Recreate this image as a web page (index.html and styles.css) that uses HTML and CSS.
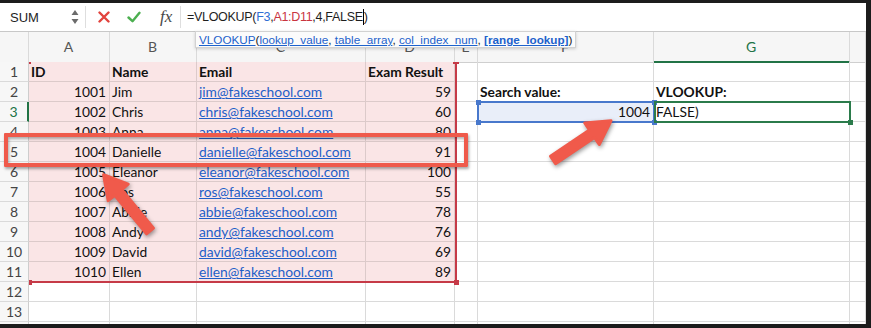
FILE: index.html
```html
<!DOCTYPE html>
<html lang="en">

<head>
  <meta charset="UTF-8">
  <title>VLOOKUP</title>
  <link rel="stylesheet" href="styles.css">
</head>

<body>
  <div class="screen">
    <div class="formula-bar">
      <div class="name-box">
        <span>SUM</span>
        <svg width="8" height="16" viewBox="0 0 8 16"><path d="M4 1 L7.5 6 H0.5 Z M4 15 L7.5 10 H0.5 Z" fill="#6b6b6b"/></svg>
      </div>
      <div class="fbar-icons">
        <svg class="ico-x" width="12" height="12" viewBox="0 0 12 12"><path d="M1.5 1.5 L10.5 10.5 M10.5 1.5 L1.5 10.5" stroke="#e2433d" stroke-width="2.4" stroke-linecap="round"/></svg>
        <svg class="ico-ok" width="14" height="12" viewBox="0 0 14 12"><path d="M1.5 6.5 L5.5 10.2 L12.5 1.8" fill="none" stroke="#4caf50" stroke-width="2.4" stroke-linecap="round" stroke-linejoin="round"/></svg>
        <span class="fx">fx</span>
      </div>
      <div class="formula">=VLOOKUP(<span class="ref-f">F3</span>,<span class="ref-a">A1:D11</span>,4,FALSE<span class="caret"></span>)</div>
    </div>

    <div class="sheet">
      <div class="r head">
        <div></div><div>A</div><div>B</div><div>C</div><div>D</div><div>E</div><div>F</div><div class="gcol">G</div><div></div>
      </div>
      <div class="r data">
        <div class="rh">1</div><div class="c b">ID</div><div class="c b">Name</div><div class="c b">Email</div><div class="c b">Exam Result</div><div class="c"></div><div class="c"></div><div class="c"></div><div class="c"></div>
      </div>
      <div class="r data">
        <div class="rh">2</div><div class="c n">1001</div><div class="c">Jim</div><div class="c"><a class="link">jim@fakeschool.com</a></div><div class="c n">59</div><div class="c"></div><div class="c b">Search value:</div><div class="c b">VLOOKUP:</div><div class="c"></div>
      </div>
      <div class="r data cur">
        <div class="rh">3</div><div class="c n">1002</div><div class="c">Chris</div><div class="c"><a class="link">chris@fakeschool.com</a></div><div class="c n">60</div><div class="c"></div><div class="c n sf">1004</div><div class="c">FALSE)</div><div class="c"></div>
      </div>
      <div class="r data">
        <div class="rh">4</div><div class="c n">1003</div><div class="c">Anna</div><div class="c"><a class="link">anna@fakeschool.com</a></div><div class="c n">80</div><div class="c"></div><div class="c"></div><div class="c"></div><div class="c"></div>
      </div>
      <div class="r data">
        <div class="rh">5</div><div class="c n">1004</div><div class="c">Danielle</div><div class="c"><a class="link">danielle@fakeschool.com</a></div><div class="c n">91</div><div class="c"></div><div class="c"></div><div class="c"></div><div class="c"></div>
      </div>
      <div class="r data">
        <div class="rh">6</div><div class="c n">1005</div><div class="c">Eleanor</div><div class="c"><a class="link">eleanor@fakeschool.com</a></div><div class="c n">100</div><div class="c"></div><div class="c"></div><div class="c"></div><div class="c"></div>
      </div>
      <div class="r data">
        <div class="rh">7</div><div class="c n">1006</div><div class="c">Ros</div><div class="c"><a class="link">ros@fakeschool.com</a></div><div class="c n">55</div><div class="c"></div><div class="c"></div><div class="c"></div><div class="c"></div>
      </div>
      <div class="r data">
        <div class="rh">8</div><div class="c n">1007</div><div class="c">Abbie</div><div class="c"><a class="link">abbie@fakeschool.com</a></div><div class="c n">78</div><div class="c"></div><div class="c"></div><div class="c"></div><div class="c"></div>
      </div>
      <div class="r data">
        <div class="rh">9</div><div class="c n">1008</div><div class="c">Andy</div><div class="c"><a class="link">andy@fakeschool.com</a></div><div class="c n">76</div><div class="c"></div><div class="c"></div><div class="c"></div><div class="c"></div>
      </div>
      <div class="r data">
        <div class="rh">10</div><div class="c n">1009</div><div class="c">David</div><div class="c"><a class="link">david@fakeschool.com</a></div><div class="c n">69</div><div class="c"></div><div class="c"></div><div class="c"></div><div class="c"></div>
      </div>
      <div class="r data">
        <div class="rh">11</div><div class="c n">1010</div><div class="c">Ellen</div><div class="c"><a class="link">ellen@fakeschool.com</a></div><div class="c n">89</div><div class="c"></div><div class="c"></div><div class="c"></div><div class="c"></div>
      </div>
      <div class="r">
        <div class="rh">12</div><div class="c"></div><div class="c"></div><div class="c"></div><div class="c"></div><div class="c"></div><div class="c"></div><div class="c"></div><div class="c"></div>
      </div>
      <div class="r">
        <div class="rh">13</div><div class="c"></div><div class="c"></div><div class="c"></div><div class="c"></div><div class="c"></div><div class="c"></div><div class="c"></div><div class="c"></div>
      </div>
      <div class="r">
        <div class="rh"></div><div class="c"></div><div class="c"></div><div class="c"></div><div class="c"></div><div class="c"></div><div class="c"></div><div class="c"></div><div class="c"></div>
      </div>
    </div>
  </div>

  <!-- overlays: function tip, reference borders, callouts -->
  <div class="tooltip"><a>VLOOKUP</a>(<a>lookup_value</a>, <a>table_array</a>, <a>col_index_num</a>, <a class="opt">[range_lookup]</a>)</div>

  <div class="range-a">
    <span class="k tl"></span><span class="k tr"></span><span class="k bl"></span><span class="k br"></span>
  </div>
  <div class="range-f">
    <span class="k tl"></span><span class="k tr"></span><span class="k bl"></span><span class="k br"></span>
  </div>
  <div class="active-g"><span class="k br"></span></div>

  <div class="callout-box"></div>

  <svg class="arrows" width="871" height="328" viewBox="0 0 871 328">
    <g transform="translate(150 231) rotate(-129.5)">
      <path d="M0 -4.5 H50 V-13 L73 0 L50 13 V4.5 H0 Z" fill="#f05a4b" stroke="#f05a4b" stroke-width="3" stroke-linejoin="round"/>
    </g>
    <g transform="translate(553 160) rotate(-34)">
      <path d="M0 -4.5 H47 V-13 L70 0 L47 13 V4.5 H0 Z" fill="#f05a4b" stroke="#f05a4b" stroke-width="3" stroke-linejoin="round"/>
    </g>
  </svg>
</body>

</html>
```

FILE: styles.css
```css
* {
  margin: 0;
  padding: 0;
}

body {
  width: 871px;
  height: 328px;
  position: relative;
  overflow: hidden;
  background: #1c1c1c;
  font-family: "Lato", "Liberation Sans", sans-serif;
}

.screen {
  margin: 3px 5px 0 0;
  height: 321px;
  background: #ffffff;
  overflow: hidden;
}

/* formula bar */
.formula-bar {
  height: 28px;
  display: flex;
  align-items: center;
  border-bottom: 1px solid #c8c8c8;
  font-family: "Liberation Sans", Arial, sans-serif;
  font-size: 13px;
  color: #1e1e1e;
}

.name-box {
  width: 86px;
  height: 22px;
  box-sizing: border-box;
  padding: 0 6px 0 10px;
  display: flex;
  align-items: center;
  justify-content: space-between;
  border-right: 1px solid #dedede;
}

.fbar-icons {
  width: 94px;
  height: 22px;
  display: flex;
  align-items: center;
  border-right: 1px solid #dedede;
}

.fbar-icons .ico-x {
  margin-left: 12px;
}

.fbar-icons .ico-ok {
  margin-left: 17px;
}

.fbar-icons .fx {
  margin-left: 19px;
  font-family: "Liberation Serif", serif;
  font-style: italic;
  font-size: 17px;
  color: #474747;
}

.formula {
  padding-left: 6px;
  display: flex;
  align-items: center;
  white-space: pre;
  font-size: 12.5px;
  letter-spacing: -0.3px;
}

.formula .ref-f {
  color: #2f6ed3;
}

.formula .ref-a {
  color: #c9343f;
}

.formula .caret {
  width: 1px;
  height: 16px;
  background: #000;
}

/* sheet grid */
.r {
  display: grid;
  grid-template-columns: 29px 81px 87px 169px 89px 23px 176px 196px 1fr;
  height: 20px;
}

.r > div {
  box-sizing: border-box;
  border-right: 1px solid #dadada;
  border-bottom: 1px solid #dadada;
  padding: 0 3px 0 2px;
  line-height: 19px;
  font-size: 13.8px;
  color: #111;
  white-space: nowrap;
}

.r.head {
  height: 30px;
}

.r.head > div {
  line-height: 29px;
  background: #f6f6f6;
  border-bottom-color: #cfcfcf;
  text-align: center;
  font-size: 14px;
  color: #555;
}

.r.head .gcol {
  color: #217346;
  border-bottom: 2px solid #217346;
}

.r .rh {
  background: #f7f7f7;
  border-right-color: #cdcdcd;
  text-align: center;
  padding: 0;
  font-size: 14px;
  color: #444;
}

.r.cur .rh {
  color: #217346;
  border-right: 2px solid #217346;
}

.data .c:nth-child(-n+5) {
  background: #fae5e6;
  border-color: #dccaca;
}

.r .b {
  font-weight: bold;
}

.r .n {
  text-align: right;
}

.r .sf {
  background: #e9eef9;
}

.link {
  color: #1f5fc8;
  text-decoration: underline;
}

/* function tooltip */
.tooltip {
  position: absolute;
  left: 195px;
  top: 31px;
  height: 17px;
  padding: 0 3px;
  box-sizing: border-box;
  background: #fbfbfb;
  border: 1px solid #d2d2d2;
  box-shadow: 0 1px 3px rgba(0, 0, 0, 0.18);
  font-family: "Liberation Sans", Arial, sans-serif;
  font-size: 11.7px;
  line-height: 15px;
  color: #222;
  white-space: nowrap;
}

.tooltip a {
  color: #1d62cc;
  text-decoration: underline;
}

.tooltip a.opt {
  font-weight: bold;
}

/* reference borders */
.range-a,
.range-f,
.active-g {
  position: absolute;
  box-sizing: border-box;
}

.range-a {
  left: 29px;
  top: 62px;
  width: 428px;
  height: 221px;
  border-right: 2px solid #c63a47;
  border-bottom: 2px solid #c63a47;
}

.range-f {
  left: 477px;
  top: 101px;
  width: 178px;
  height: 22px;
  border: 2px solid #4878cc;
}

.active-g {
  left: 654px;
  top: 101px;
  width: 197px;
  height: 22px;
  border: 2px solid #2b7b4b;
}

.k {
  position: absolute;
  width: 5px;
  height: 5px;
}

.range-a .k {
  background: #c63a47;
}

.range-f .k {
  background: #4878cc;
}

.active-g .k {
  background: #2b7b4b;
}

.k.tl {
  left: -3px;
  top: -3px;
}

.k.tr {
  right: -4px;
  top: -3px;
}

.k.bl {
  left: -3px;
  bottom: -4px;
}

.k.br {
  right: -4px;
  bottom: -4px;
}

.range-a .k.tl {
  left: 0;
  top: 0;
  width: 2px;
  height: 2px;
}

.range-a .k.tr {
  top: 0;
  height: 2px;
  width: 6px;
}

.range-a .k.bl {
  left: 0;
  width: 3px;
}

/* red callouts */
.callout-box {
  position: absolute;
  left: 4px;
  top: 133px;
  width: 464px;
  height: 34px;
  box-sizing: border-box;
  border: 4px solid #ef5a4b;
  border-radius: 1px;
  box-shadow: 1px 2px 3px rgba(0, 0, 0, 0.35), inset 1px 2px 3px rgba(0, 0, 0, 0.3);
}

.arrows {
  position: absolute;
  left: 0;
  top: 0;
  pointer-events: none;
  filter: drop-shadow(1px 2px 2px rgba(0, 0, 0, 0.4));
}
```
